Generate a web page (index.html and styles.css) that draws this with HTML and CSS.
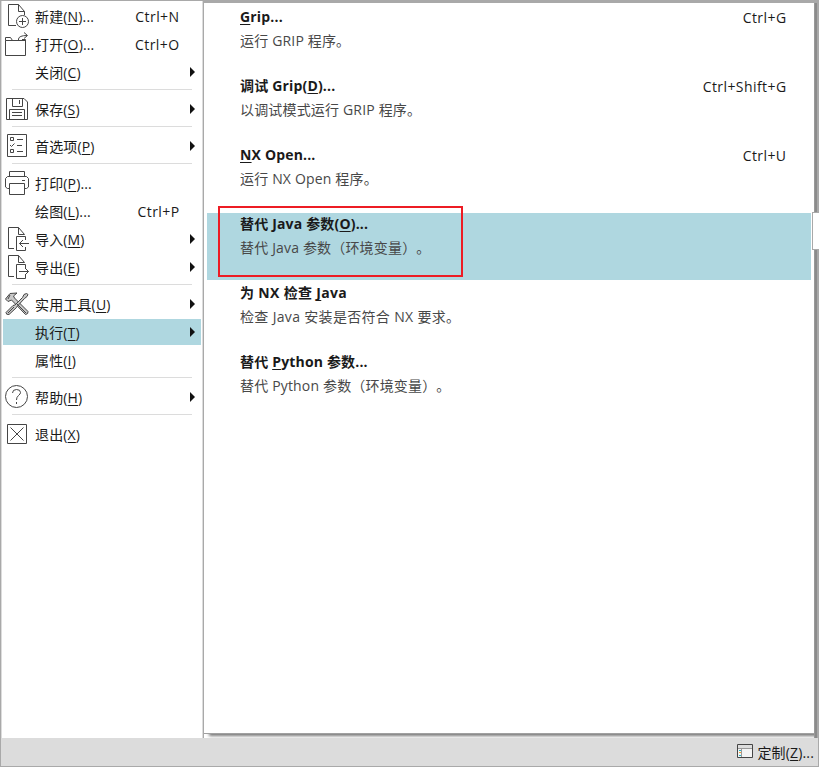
FILE: index.html
```html
<!DOCTYPE html>
<html lang="zh-CN">
<head>
<meta charset="utf-8">
<title>文件</title>
<link rel="stylesheet" href="styles.css">
</head>
<body>
<div class="window">
<div class="content">
<nav class="menu">
<div class="item"><svg class="icon" viewBox="2 0 32 28"><path d="M16 22.5H8.5V1.5H18.5L24.5 8.5V12M18.5 1.5V8.5H24.5"/><circle cx="22.5" cy="18.5" r="6"/><path d="M19 18.5H26M22.5 15V22"/></svg><span class="label">新建(<u>N</u>)...</span><kbd>Ctrl+N</kbd></div>
<div class="item"><svg class="icon" viewBox="2 0 32 28"><path d="M5.500 9.500H25.500V24.500H5.500ZM5.500 9.500V6.500H10.500L12.500 9.500M22 8.500H25.500V10"/><path d="M18.500 9V8Q19 4.500 27 4.500M24 1.500L27.500 4.500L24 7.500"/></svg><span class="label">打开(<u>O</u>)...</span><kbd>Ctrl+O</kbd></div>
<div class="item sub"><span class="icon"></span><span class="label">关闭(<u>C</u>)</span></div>
<hr>
<div class="item sub"><svg class="icon" viewBox="2 0 32 28"><path d="M6.500 2.500H24L27.500 6V23.500H6.500ZM12.500 2.500V10.500H22.500V2.500M19.500 4V8M9.500 23.500V13.500H24.500V23.500M12 16.500H22M12 19.500H22"/></svg><span class="label">保存(<u>S</u>)</span></div>
<hr>
<div class="item sub"><svg class="icon" viewBox="2 0 32 28"><path d="M7.500 1.500H26.500V23.500H7.500ZM10.500 4.500H13.500V7.500H10.500ZM10.500 16.500H13.500V19.500H10.500ZM17 6.500H23M17 12.500H22M17 18.500H23M10 12L11.500 13.500L14.500 10.500"/></svg><span class="label">首选项(<u>P</u>)</span></div>
<hr>
<div class="item"><svg class="icon" viewBox="2 0 32 28"><path d="M9.500 6.500V1.500H24.500V6.500M9 18.500H7.500L5.500 17V8.500L7.500 6.500H26.500L28.500 8.500V17L26.500 18.500H25M9.500 13.500H24.500V24.500H9.500ZM22 10.500H25"/></svg><span class="label">打印(<u>P</u>)...</span></div>
<div class="item"><span class="icon"></span><span class="label">绘图(<u>L</u>)...</span><kbd>Ctrl+P</kbd></div>
<div class="item sub"><svg class="icon" viewBox="2 0 32 28"><path d="M14 22.500H8.500V1.500H18.500L24.500 8.500M18.500 1.500V8.500H24.500M25.500 14V10.500H16.500V24.500H25.500V21M29 17.500H19.500M23 14L19.500 17.500L23 21"/></svg><span class="label">导入(<u>M</u>)</span></div>
<div class="item sub"><svg class="icon" viewBox="2 0 32 28"><path d="M14 22.500H8.500V1.500H18.500L24.500 8.500M18.500 1.500V8.500H24.500M25.500 14V10.500H16.500V24.500H25.500V21M19 17.500H28.500M25 14L28.500 17.500L25 21"/></svg><span class="label">导出(<u>E</u>)</span></div>
<hr>
<div class="item sub"><svg class="icon" viewBox="2 0 32 28"><path class="metal" d="M5.500 8L10 2.500L17 2L13.500 5L14.500 7L28 20.500Q28.500 23 25.500 23.500L11.500 9L8 10.500Z"/><path class="metal" d="M26.500 2.500L24 3.500L22.500 6.500L15 14L13 14.500L6 21.500Q6 24 9 23.500L16.500 16.500L17 15.500L24.500 7.500L27 5.500L28 3.500Z"/><path d="M17 13L26 22M8 22L14 16M10 4L8 8"/></svg><span class="label">实用工具(<u>U</u>)</span></div>
<div class="item sub active"><span class="icon"></span><span class="label">执行(<u>T</u>)</span></div>
<div class="item"><span class="icon"></span><span class="label">属性(<u>I</u>)</span></div>
<hr>
<div class="item sub"><svg class="icon" viewBox="2 0 32 28"><circle cx="16.500" cy="12.500" r="11"/><path d="M12.500 9Q12.500 5.500 16.500 5.500Q20.500 5.500 20.500 8.500Q20.500 10 18.500 11.500Q16.500 13 16.500 16M16.500 18V20"/></svg><span class="label">帮助(<u>H</u>)</span></div>
<hr>
<div class="item"><svg class="icon" viewBox="2 0 32 28"><path d="M7.500 3.500H26.500V22.500H7.500ZM10.500 6.500L23.500 19.500M23.500 6.500L10.500 19.500"/></svg><span class="label">退出(<u>X</u>)</span></div>
</nav>
<main class="panel">
<section class="entry"><div class="text"><h2><u>G</u>rip...</h2><p>运行 GRIP 程序。</p></div><kbd>Ctrl+G</kbd></section>
<section class="entry"><div class="text"><h2>调试 Grip(<u>D</u>)...</h2><p>以调试模式运行 GRIP 程序。</p></div><kbd>Ctrl+Shift+G</kbd></section>
<section class="entry"><div class="text"><h2><u>N</u>X Open...</h2><p>运行 NX Open 程序。</p></div><kbd>Ctrl+U</kbd></section>
<section class="entry active"><div class="text"><h2>替代 Java 参数(<u>O</u>)...</h2><p>替代 Java 参数（环境变量）。</p></div><div class="marker"></div></section>
<section class="entry wide"><div class="text"><h2>为 NX 检查 <u>J</u>ava</h2><p>检查 Java 安装是否符合 NX 要求。</p></div></section>
<section class="entry"><div class="text"><h2>替代 <u>P</u>ython 参数...</h2><p>替代 Python 参数（环境变量）。</p></div></section>
</main>
<div class="edge"><div class="tab"></div></div>
</div>
<footer class="footer"><svg class="custom" viewBox="0 0 16 14"><path class="head" d="M1 1H15V4H1Z"/><path class="body" d="M1 5H15V13H1Z"/><path d="M.5 .5H15.500V13.500H.5Z"/><path class="thin" d="M1 4.500H15M4.500 5V13"/><path class="teal" d="M2 6.500H4"/><path class="orange" d="M2 8.500H4"/><path class="teal" d="M2 11.500H4"/></svg><span>定制(<u>Z</u>)...</span></footer>
</div>
</body>
</html>
```
FILE: styles.css
```css
* { box-sizing: border-box; }
body {
  margin: 0;
  background: #fff;
  color: #1a1a1a;
  font: 14px/20px "Open Sans", "Noto Sans CJK SC", sans-serif;
  text-spacing-trim: space-all;
}
.window {
  width: 819px;
  height: 767px;
  display: flex;
  flex-direction: column;
  border: solid #a9a9a9;
  border-width: 1px 0 1px 1px;
  overflow: hidden;
}
.content { display: flex; height: 737px; }
.menu {
  display: flex;
  flex-direction: column;
  width: 203px;
  padding: 2px 1px 0;
  border-left: 1px solid #dcdcdc;
  border-right: 1px solid #a9a9a9;
  box-shadow: inset -1px 0 #dcdcdc;
}
.item {
  display: flex;
  flex: none;
  height: 26px;
  width: 198px;
  margin-bottom: 2px;
}
.icon {
  width: 32px;
  height: 28px;
  margin-left: -1px;
  flex: none;
}
svg { fill: none; stroke: #454545; stroke-width: 1; }
.metal { fill: #c8c8c8; }
.label { padding-top: 4px; margin-left: 1px; flex: 1; white-space: nowrap; letter-spacing: .15px; }
kbd { font: inherit; letter-spacing: .42px; }
.item kbd { padding-top: 4px; margin-right: 21.500px; }
u { text-underline-offset: 2px; text-decoration-thickness: 1px; text-decoration-skip-ink: none; }
.sub::after {
  content: "";
  border: solid transparent;
  border-width: 5px 0 5px 5px;
  border-left-color: #111;
  height: 0;
  margin: 8px 6px 0 0;
}
.active { background: #afd7e0; }
hr {
  height: 1px;
  width: 180px;
  margin: 2px 0 6px 9px;
  border: 0;
  flex: none;
  background: #dcdcdc;
}
.panel {
  width: 610px;
  height: 733px;
  padding: 3px 3px 0;
  border-top: 2px solid #a9a9a9;
  border-bottom: 1px solid #a0a0a0;
  box-shadow: 4px 3px 3px -1px #777;
}
.entry {
  position: relative;
  width: 604px;
  height: 67px;
  margin-bottom: 2px;
  padding: 1px 24.500px 0 33px;
  display: flex;
  justify-content: space-between;
  letter-spacing: .17px;
}
.wide { letter-spacing: .33px; }
h2 { font: bold 14px/20px "Open Sans", "Noto Sans CJK SC", sans-serif; margin: 0 0 4px; }
p { margin: 0; color: #484848; }
.entry kbd { padding-top: 1px; }
.marker {
  position: absolute;
  left: 11px;
  top: -7px;
  width: 245px;
  height: 71px;
  border: 2px solid #ed1c24;
}
.edge {
  position: relative;
  width: 5px;
  border-top: 2px solid #a9a9a9;
  background: linear-gradient(90deg, #999 0 1px, #8b8b8b 1px 3px, #a9a9a9 3px);
}
.tab {
  position: absolute;
  left: -2px;
  top: 209px;
  width: 9px;
  height: 38px;
  background: #fff;
  border: 1px solid #a9a9a9;
  border-right: 0;
}
.footer {
  position: relative;
  height: 28px;
  flex: none;
  background: #dcdcdc;
  border-right: 1px solid #a9a9a9;
  display: flex;
  justify-content: flex-end;
  padding: 5px 4px 0 0;
  letter-spacing: .15px;
}
.custom { width: 16px; height: 14px; margin: 1px 4px 0 0; }
.head { fill: #ddd; stroke: none; }
.body { fill: #f4f4f4; stroke: none; }
.thin { stroke: #999; }
.teal { stroke: #20b5c5; }
.orange { stroke: #f0a030; }
```
